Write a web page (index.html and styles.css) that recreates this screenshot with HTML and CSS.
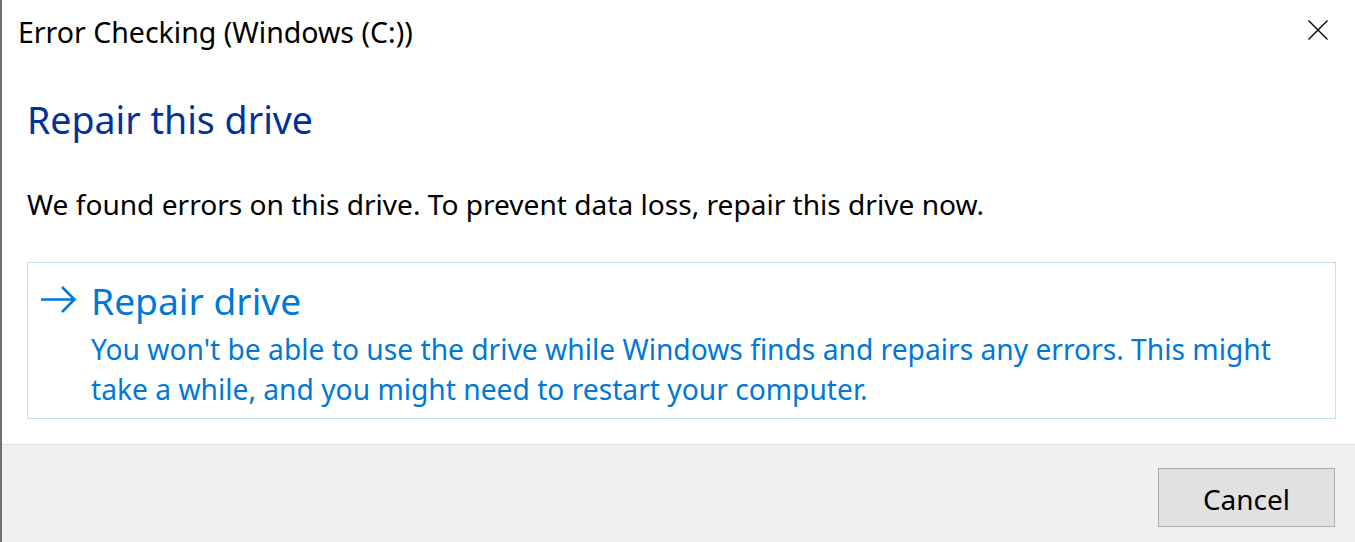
FILE: index.html
```html
<!DOCTYPE html>
<html>
<head>
<meta charset="utf-8">
<link rel="stylesheet" href="styles.css">
</head>
<body>
<div class="window">
  <div class="content">
    <div class="titlebar">
      <span class="title">Error Checking (Windows (C:))</span>
      <svg class="close" width="20" height="20" viewBox="0 0 20 20"><path d="M0.5 0.5 L19.5 19.5 M19.5 0.5 L0.5 19.5" stroke="#000" stroke-width="1.4" fill="none"/></svg>
    </div>
    <h1 class="instruction">Repair this drive</h1>
    <p class="message">We found errors on this drive. To prevent data loss, repair this drive now.</p>
    <div class="cmdlink">
      <svg class="arrow" width="36" height="27" viewBox="0 0 36 27"><path d="M0 13.5 H33.5 M21 1 L33.5 13.5 L21 26" stroke="#0078d7" stroke-width="2.6" fill="none"/></svg>
      <div class="cmdtext">
        <div class="cmdtitle">Repair drive</div>
        <div class="cmddesc">You won't be able to use the drive while Windows finds and repairs any errors. This might take a while, and you might need to restart your computer.</div>
      </div>
    </div>
  </div>
  <div class="footer">
    <button class="btn">Cancel</button>
  </div>
</div>
</body>
</html>
```
FILE: styles.css
```css
html, body {
  margin: 0;
  padding: 0;
  background: #fff;
}
body {
  width: 1355px;
  height: 542px;
  overflow: hidden;
  font-family: "Noto Sans", "Open Sans", sans-serif;
}
.window {
  display: flex;
  flex-direction: column;
  height: 542px;
  border-left: 2px solid #707070;
  box-sizing: border-box;
}
.content {
  background: #fff;
  padding-left: 25px;
  padding-right: 19px;
  height: 444px;
  box-sizing: border-box;
}
.titlebar {
  display: flex;
  justify-content: space-between;
  align-items: flex-start;
  height: 62px;
  margin-left: -9px;
}
.title {
  font-size: 28.5px;
  line-height: 38px;
  margin-top: 13px;
  color: #000;
}
.close {
  margin-top: 20px;
  margin-right: 8px;
}
.instruction {
  margin: 0;
  font-weight: normal;
  font-size: 37.5px;
  line-height: 50px;
  height: 50px;
  margin-top: 33px;
  color: #003399;
}
.message {
  margin: 0;
  margin-top: 40px;
  font-size: 28.1px;
  line-height: 38px;
  color: #000;
}
.cmdlink {
  display: flex;
  margin-top: 39px;
  border: 1px solid #bfe0f5;
  height: 157px;
  box-sizing: border-box;
  padding: 13px 30px 0 13px;
  gap: 14px;
  color: #0078d7;
}
.arrow {
  margin-top: 10px;
  flex: none;
}
.cmdtitle {
  font-size: 37.2px;
  line-height: 50px;
}
.cmddesc {
  margin-top: 3px;
  font-size: 28.2px;
  line-height: 40px;
}
.footer {
  flex: 1;
  background: #f0f0f0;
  border-top: 1px solid #dfdfdf;
  display: flex;
  justify-content: flex-end;
  align-items: flex-start;
  padding: 23px 20px 0 0;
}
.btn {
  width: 177px;
  height: 59px;
  background: #e1e1e1;
  border: 1px solid #adadad;
  font-family: inherit;
  font-size: 28px;
  color: #000;
  padding: 2px 0 0 0;
}
```
